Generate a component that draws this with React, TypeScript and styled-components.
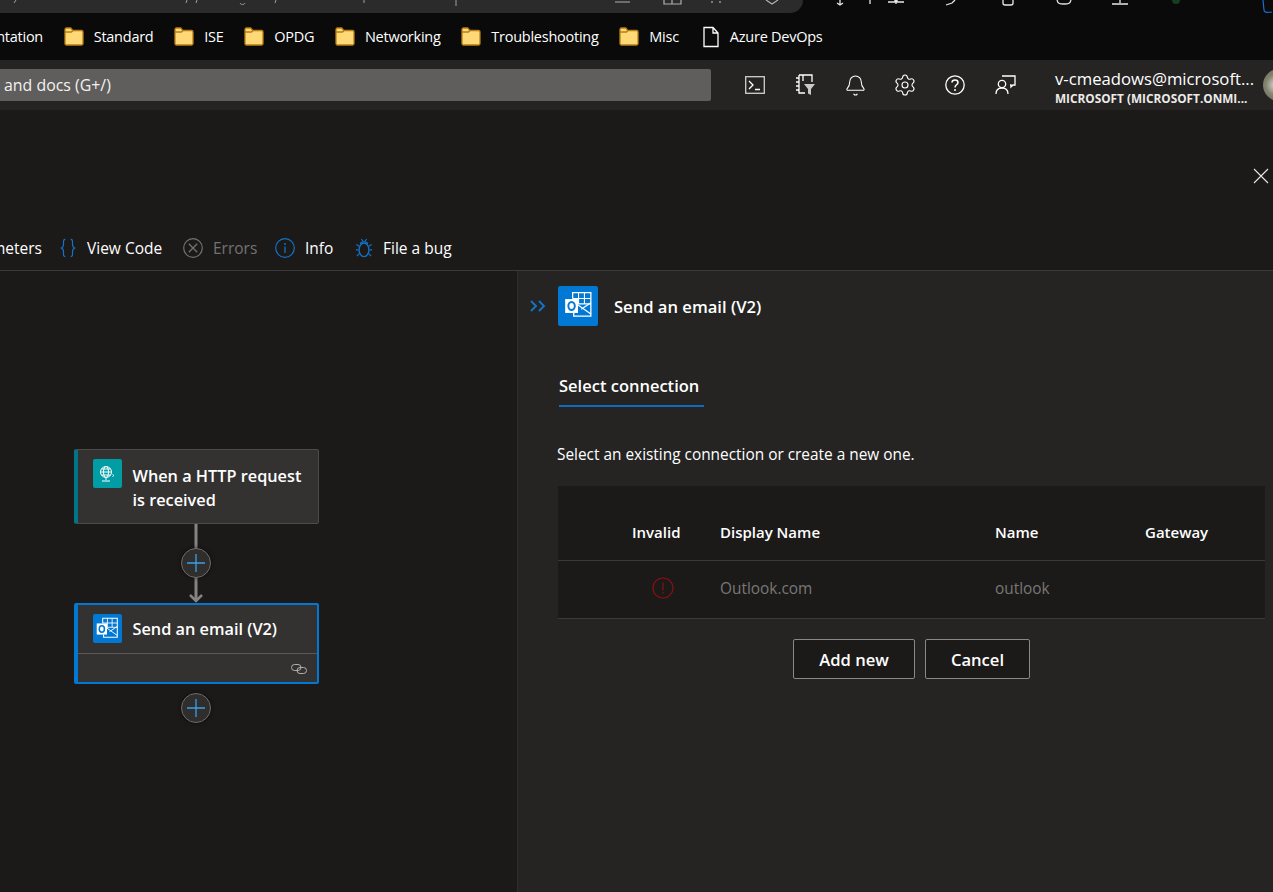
import React from 'react'
import styled, { createGlobalStyle } from 'styled-components'
import { Bell, Settings } from 'lucide-react'

const GlobalStyle = createGlobalStyle`
  html, body {
    margin: 0;
    height: 100%;
    background: #1b1a19;
    overflow: hidden;
  }
  body, button {
    font-family: 'Open Sans', 'Noto Sans', 'Liberation Sans', sans-serif;
  }
  * {
    box-sizing: border-box;
  }
`

const Page = styled.div`
  display: flex;
  flex-direction: column;
  width: 1273px;
  height: 892px;
  overflow: hidden;
  color: #fff;
`

/* browser chrome, cropped at the top of the shot */
const BrowserStrip = styled.div`
  display: flex;
  height: 13px;
  flex: none;
  background: #0a0a0a;
  overflow: hidden;
`

const AddressPill = styled.div`
  display: flex;
  width: 803px;
  height: 13px;
  flex: none;
  background: #2b2b2b;
  border-bottom-right-radius: 13px;
`

const ChromeIcons = styled.div`
  display: flex;
  flex: 1;
  padding-left: 28px;
  gap: 38px;
`

const CropIcon = styled.svg`
  width: 18px;
  height: 5px;
  flex: none;
  overflow: visible;
`

const UrlScraps = styled.svg`
  width: 803px;
  height: 13px;
  flex: none;
`

const BookmarkBar = styled.div`
  display: flex;
  align-items: center;
  height: 47px;
  flex: none;
  background: #0a0a0a;
  font-size: 14.5px;
  letter-spacing: -0.25px;
`

const CutLabel = styled.span<{ $width: number }>`
  display: flex;
  justify-content: flex-end;
  flex: none;
  width: ${({ $width }) => $width}px;
  overflow: hidden;
  white-space: nowrap;
`

const Bookmark = styled.span`
  display: flex;
  align-items: center;
  gap: 10px;
  margin-left: 20.7px;
  white-space: nowrap;
`

const PageBookmark = styled(Bookmark)`
  margin-left: 23px;
`

const FolderIcon = styled.svg`
  width: 20px;
  height: 19px;
  flex: none;
`

const PageIcon = styled.svg`
  width: 18px;
  height: 22px;
  flex: none;
`

const Topbar = styled.header`
  display: flex;
  align-items: center;
  height: 50px;
  flex: none;
  background: #252423;
`

const SearchBox = styled.div`
  display: flex;
  align-items: center;
  width: 711px;
  height: 32px;
  flex: none;
  padding-left: 4px;
  background: #605e5c;
  border-radius: 0 2px 2px 0;
  color: #f3f2f1;
  font-size: 15.9px;
  white-space: nowrap;
`

const TopIcons = styled.div`
  display: flex;
  margin-left: 19px;
`

const TopButton = styled.span`
  display: flex;
  align-items: center;
  justify-content: center;
  width: 50px;
  height: 50px;
  color: #fff;
`

const Account = styled.div`
  display: flex;
  flex-direction: column;
  width: 208px;
  flex: none;
  margin-left: 25px;
  padding-top: 6px;
  white-space: nowrap;
`

const AccountMail = styled.span`
  font-size: 16.7px;
  line-height: 20px;
`

const AccountTenant = styled.span`
  font-size: 11.8px;
  line-height: 18px;
  font-weight: 700;
  color: #edebe9;
`

const Avatar = styled.span`
  width: 32px;
  height: 32px;
  flex: none;
  border-radius: 50%;
  background: radial-gradient(circle at 40% 50%, #c4c2b8 0 12%, #85846f 40%, #55574a 100%);
`

const Blade = styled.main`
  display: flex;
  flex-direction: column;
  flex: 1;
  min-height: 0;
  background: #1b1a19;
`

const BladeHeader = styled.div`
  display: flex;
  justify-content: flex-end;
  height: 126px;
  flex: none;
  padding: 58px 4px 0 0;
`

const CloseIcon = styled.svg`
  width: 16px;
  height: 16px;
  flex: none;
`

const CommandBar = styled.div`
  display: flex;
  align-items: center;
  height: 35px;
  flex: none;
  padding-bottom: 10px;
  border-bottom: 1px solid #3b3a39;
  font-size: 15.5px;
`

const Command = styled.span<{ $disabled?: boolean; $width: number }>`
  display: flex;
  align-items: center;
  gap: 10px;
  flex: none;
  width: ${({ $width }) => $width}px;
  white-space: nowrap;
  color: ${({ $disabled }) => ($disabled ? '#737271' : '#fff')};
`

const CommandLead = styled.span`
  width: 17px;
  flex: none;
`

const CommandIcon = styled.svg<{ $color: string; $width?: number }>`
  width: ${({ $width }) => $width ?? 20}px;
  height: 22px;
  flex: none;
  color: ${({ $color }) => $color};
`

const Workspace = styled.div`
  display: flex;
  flex: 1;
  min-height: 0;
`

const Canvas = styled.section`
  display: flex;
  flex-direction: column;
  align-items: center;
  width: 518px;
  flex: none;
  padding: 178px 199px 0 74px;
  border-right: 1px solid #2f2e2d;
`

const Card = styled.article<{ $accent: string; $selected?: boolean }>`
  width: 245px;
  flex: none;
  background: #333231;
  border: ${({ $selected, $accent }) => ($selected ? `2px solid ${$accent}` : '1px solid #4c4b4a')};
  border-left: 4px solid ${({ $accent }) => $accent};
  border-radius: 2px;
`

const CardHead = styled.div<{ $tall?: boolean }>`
  display: flex;
  align-items: ${({ $tall }) => ($tall ? 'flex-start' : 'center')};
  gap: 11px;
  padding: 9px 10px ${({ $tall }) => ($tall ? 9 : 10)}px 15px;
`

const CardBadge = styled.span<{ $color: string; $size: number }>`
  display: flex;
  align-items: center;
  justify-content: center;
  width: ${({ $size }) => $size}px;
  height: ${({ $size }) => $size}px;
  flex: none;
  background: ${({ $color }) => $color};
  border-radius: 2px;
`

const CardTitle = styled.h3`
  margin: 0;
  padding-top: 1px;
  font-size: 16.3px;
  line-height: 24px;
  font-weight: 600;
  white-space: nowrap;
  color: #fff;
`

const TallTitle = styled(CardTitle)`
  padding: 5px 0 2px;
  white-space: normal;
`

const CardFooter = styled.div`
  display: flex;
  align-items: flex-end;
  justify-content: flex-end;
  height: 29px;
  padding: 0 10px 8px 0;
  border-top: 1px solid #5a5958;
`

const Connector = styled.div`
  position: relative;
  display: flex;
  justify-content: center;
  width: 30px;
  height: 79px;
  flex: none;
`

const AddStep = styled.span`
  display: flex;
  align-items: center;
  justify-content: center;
  width: 30px;
  height: 30px;
  flex: none;
  border-radius: 50%;
  background: #2f2e2d;
  border: 1px solid #6e6d6c;
  box-shadow: 0 0 4px rgba(0, 0, 0, 0.6);
`

const ConnectorAdd = styled(AddStep)`
  position: absolute;
  top: 24px;
  left: 0;
`

const TailAdd = styled(AddStep)`
  margin-top: 9px;
`

const Panel = styled.section`
  flex: 1;
  min-width: 0;
  background: #252423;
  padding: 15px 8px 0 12px;
`

const PanelHead = styled.div`
  display: flex;
  align-items: center;
  height: 40px;
`

const Chevrons = styled.svg`
  width: 16px;
  height: 14px;
  flex: none;
  margin-right: 12px;
`

const PanelTitle = styled.h2`
  margin: 0 0 0 16px;
  font-size: 16.6px;
  font-weight: 600;
`

const Tabs = styled.div`
  display: flex;
  margin: 48px 0 0 29px;
`

const Tab = styled.span`
  padding-bottom: 7px;
  width: 145px;
  border-bottom: 2px solid #0f6cbd;
  font-size: 16.5px;
  line-height: 24px;
  font-weight: 600;
  white-space: nowrap;
`

const Hint = styled.p`
  margin: 36px 0 0 27px;
  font-size: 15.4px;
  line-height: 24px;
`

const ConnectionTable = styled.table`
  display: block;
  width: 707px;
  margin: 19px 0 0 28px;
  background: #1b1a19;
  border-collapse: collapse;
  font-size: 15.4px;
`

const HeadCell = styled.th<{ $width: number; $pad?: number }>`
  width: ${({ $width }) => $width}px;
  height: 74px;
  padding: 19px 0 0 ${({ $pad }) => $pad ?? 0}px;
  border-bottom: 1px solid #3b3a39;
  font-size: 15px;
  font-weight: 600;
  text-align: left;
`

const BodyCell = styled.td<{ $pad?: number }>`
  height: 58px;
  padding: 0 0 2px ${({ $pad }) => $pad ?? 0}px;
  border-bottom: 1px solid #3b3a39;
  color: #797775;
`

const InvalidIcon = styled.svg`
  display: block;
  width: 22px;
  height: 22px;
`

const Actions = styled.div`
  display: flex;
  justify-content: center;
  gap: 10px;
  width: 707px;
  margin: 20px 0 0 28px;
`

const ActionButton = styled.button<{ $width: number }>`
  width: ${({ $width }) => $width}px;
  height: 40px;
  padding: 2px 0 0;
  background: #1b1a19;
  border: 1px solid #8a8886;
  border-radius: 2px;
  color: #fff;
  font-size: 16.6px;
  font-weight: 600;
`

const Folder = () => (
  <FolderIcon viewBox="0 0 20 19">
    <path d="M1 2.500C1 1.700 1.700 1 2.500 1h4.200l2 2.500h8.800c.8 0 1.500.7 1.500 1.500v11.500c0 .8-.7 1.500-1.500 1.500h-15C1.700 18 1 17.300 1 16.500z" fill="#ffd877" stroke="#b77f14" strokeWidth="1.300" />
    <path d="M1 5h6.500l1.500-1.500" fill="none" stroke="#b77f14" strokeWidth="1.300" />
  </FolderIcon>
)

const Stroke = ({ d, width = 1.3 }: { d: string; width?: number }) => (
  <path d={d} fill="none" stroke="currentColor" strokeWidth={width} />
)

const OutlookMark = ({ size }: { size: number }) => (
  <svg width={size} height={size} viewBox="0 0 28 28" fill="none" stroke="#fff">
    <path d="M9 7V1.500h17v22H10v-3" strokeWidth="1.200" />
    <path d="M14.500 1.500V12M20 1.500V12M9 7h17M14 12h12" strokeWidth="1" />
    <path d="M14 13l12 8.500M26 11l-9 6" strokeWidth="1.100" />
    <rect x="2" y="7.500" width="12" height="13" fill="#fff" stroke="none" />
    <ellipse cx="8" cy="14" rx="3" ry="3.700" stroke="#0078d4" strokeWidth="1.800" />
  </svg>
)

const GlobeMark = () => (
  <svg width="18" height="18" viewBox="0 0 18 18" fill="none" stroke="#fff" strokeWidth="1">
    <circle cx="8" cy="7" r="5.500" />
    <ellipse cx="8" cy="7" rx="2.500" ry="5.500" />
    <path d="M2.500 7h11M3.500 4h9M3.500 10h9M8 12.500v2.500M4 16h8" />
    <path d="M14.500 9.500l1.500 1-1.500 1" strokeWidth="0.900" />
  </svg>
)

const PlusMark = () => (
  <svg width="18" height="18" viewBox="0 0 18 18">
    <path d="M9 0v18M0 9h18" stroke="#3aa0e8" strokeWidth="1.300" />
  </svg>
)

export default function App() {
  return (
    <Page>
      <GlobalStyle />
      <BrowserStrip>
        <AddressPill>
          <UrlScraps viewBox="0 0 803 13">
            <path d="M14 3l2-3M186 3l1-3M196 3l1-3M240 3c1 2 4 2 5 0M275 3l1-3M364 3V0M456 6V0" stroke="#a0a0a0" strokeWidth="1" fill="none" />
            <path d="M615 2h15M664 0v4h17V0M672 0v4M712 1v2M720 1v2M766 0l6 4 6-4" stroke="#b0b0b0" strokeWidth="1.200" fill="none" />
          </UrlScraps>
        </AddressPill>
        <ChromeIcons>
          {[
            'M6 3l3 2 3-2M9 0v5M39 0v4',
            'M1 2h7v-2M10 0v2h7M9 0v4',
            'M3 5l6-2 3-3',
            'M4 0v3c0 1 1 2 2 2h6c1 0 2-1 2-2V0',
            'M2 0c1 4 3 4 7 4s6 0 7-4',
            'M1 4h16M9 0v3',
          ].map((d) => (
            <CropIcon key={d} viewBox="0 0 18 5">
              <path d={d} stroke="#e8e8e8" strokeWidth="1.300" fill="none" />
            </CropIcon>
          ))}
          <CropIcon viewBox="0 0 18 5">
            <circle cx="9" cy="0" r="4" fill="#143f1e" />
            <path d="M96 0l1 10c0 2 2 3 8 2" stroke="#1a6fd0" strokeWidth="1.200" fill="none" />
          </CropIcon>
        </ChromeIcons>
      </BrowserStrip>

      <BookmarkBar>
        <CutLabel $width={43}>Documentation</CutLabel>
        {['Standard', 'ISE', 'OPDG', 'Networking', 'Troubleshooting', 'Misc'].map((name) => (
          <Bookmark key={name}>
            <Folder />
            {name}
          </Bookmark>
        ))}
        <PageBookmark>
          <PageIcon viewBox="0 0 18 22">
            <path d="M2 1.500h9l5 5.500v13.500H2zM11 1.500V7h5" fill="none" stroke="#fff" strokeWidth="1.300" />
          </PageIcon>
          Azure DevOps
        </PageBookmark>
      </BookmarkBar>

      <Topbar>
        <SearchBox>and docs (G+/)</SearchBox>
        <TopIcons>
          <TopButton>
            <svg width="20" height="18" viewBox="0 0 20 18" fill="none" stroke="currentColor" strokeWidth="1.300">
              <rect x="0.700" y="0.700" width="18.600" height="16.600" stroke="#d0d0d0" />
              <path d="M4 5l4 4-4 4M10 13.500h5" />
            </svg>
          </TopButton>
          <TopButton>
            <svg width="21" height="22" viewBox="0 0 21 22" fill="none">
              <Stroke d="M4 1h13v7M4 1v18h6M1 4h3M1 8h3M1 12h3M1 16h3M8 1v6" />
              <path d="M9 10h11l-4 5v6l-3-1.500V15z" fill="#c8c8c8" />
            </svg>
          </TopButton>
          <TopButton>
            <Bell size={23} strokeWidth={1.1} />
          </TopButton>
          <TopButton>
            <Settings size={24} strokeWidth={1.1} />
          </TopButton>
          <TopButton>
            <svg width="20" height="20" viewBox="0 0 20 20" fill="none">
              <circle cx="10" cy="10" r="9.200" stroke="currentColor" strokeWidth="1.300" />
              <Stroke d="M7 7.500C7 5.800 8.300 5 10 5s3 1 3 2.500c0 2.300-3 2.300-3 5" width={1.500} />
              <circle cx="10" cy="15" r="1" fill="currentColor" />
            </svg>
          </TopButton>
          <TopButton>
            <svg width="21" height="20" viewBox="0 0 21 20" fill="none">
              <Stroke d="M7 1h13v9h-2l-2 2v-2h-1" />
              <circle cx="7" cy="9" r="3.700" stroke="currentColor" strokeWidth="1.300" />
              <Stroke d="M1 19c0-4 2.500-6 6-6s6 2 6 6" />
            </svg>
          </TopButton>
        </TopIcons>
        <Account>
          <AccountMail>v-cmeadows@microsoft...</AccountMail>
          <AccountTenant>MICROSOFT (MICROSOFT.ONMI...</AccountTenant>
        </Account>
        <Avatar />
      </Topbar>

      <Blade>
        <BladeHeader>
          <CloseIcon viewBox="0 0 16 16">
            <path d="M1 1l14 14M15 1L1 15" stroke="#e8e8e8" strokeWidth="1.100" />
          </CloseIcon>
        </BladeHeader>

        <CommandBar>
          <CutLabel $width={42}>Parameters</CutLabel>
          <CommandLead />
          <Command $width={124}>
            <CommandIcon viewBox="0 0 20 22" $color="#1373c9" $width={18}>
              <Stroke d="M7 1.500C4.500 1.500 5 4 5 7c0 2.500-.5 3.500-3 4 2.500.5 3 1.500 3 4 0 3-.5 5.500 2 5.500M13 1.500c2.500 0 2 2.500 2 5.500 0 2.500.5 3.500 3 4-2.500.5-3 1.500-3 4 0 3 .5 5.500-2 5.500" />
            </CommandIcon>
            View Code
          </Command>
          <Command $disabled $width={92}>
            <CommandIcon viewBox="0 0 20 22" $color="#737271">
              <circle cx="10" cy="11" r="9.300" fill="none" stroke="currentColor" strokeWidth="1.200" />
              <Stroke d="M5.800 6.800l8.400 8.400M14.200 6.800l-8.400 8.400" />
            </CommandIcon>
            Errors
          </Command>
          <Command $width={80}>
            <CommandIcon viewBox="0 0 20 22" $color="#1373c9">
              <circle cx="10" cy="11" r="9.300" fill="none" stroke="currentColor" strokeWidth="1.200" />
              <Stroke d="M10 9.500V16" />
              <circle cx="10" cy="7" r="0.900" fill="currentColor" />
            </CommandIcon>
            Info
          </Command>
          <Command $width={100}>
            <CommandIcon viewBox="0 0 20 22" $color="#1373c9" $width={18}>
              <ellipse cx="10" cy="13" rx="5.500" ry="7.500" fill="none" stroke="currentColor" strokeWidth="1.500" />
              <Stroke d="M6 6.500c0-3 8-3 8 0M7 1l2 2.500M13 1l-2 2.500M4.500 9L1.500 7M15.500 9l3-2M4 13H1M16 13h3M5 17l-3 3M15 17l3 3" />
            </CommandIcon>
            File a bug
          </Command>
        </CommandBar>

        <Workspace>
          <Canvas>
            <Card $accent="#00758a">
              <CardHead $tall>
                <CardBadge $color="#009da5" $size={29}>
                  <GlobeMark />
                </CardBadge>
                <TallTitle>When a HTTP request is received</TallTitle>
              </CardHead>
            </Card>
            <Connector>
              <svg width="30" height="79" viewBox="0 0 30 79" fill="none" stroke="#858483">
                <path d="M15 0v77" strokeWidth="3" />
                <path d="M9 71l6 6 6-6" strokeWidth="2.500" />
              </svg>
              <ConnectorAdd>
                <PlusMark />
              </ConnectorAdd>
            </Connector>
            <Card $accent="#0078d4" $selected>
              <CardHead>
                <CardBadge $color="#0078d4" $size={29}>
                  <OutlookMark size={24} />
                </CardBadge>
                <CardTitle>Send an email (V2)</CardTitle>
              </CardHead>
              <CardFooter>
                <svg width="16" height="10" viewBox="0 0 16 10" fill="none" stroke="#b0afae" strokeWidth="1">
                  <rect x="0.500" y="0.500" width="9.500" height="6" rx="3" />
                  <rect x="6" y="3.500" width="9.500" height="6" rx="3" />
                </svg>
              </CardFooter>
            </Card>
            <TailAdd>
              <PlusMark />
            </TailAdd>
          </Canvas>

          <Panel>
            <PanelHead>
              <Chevrons viewBox="0 0 16 14">
                <path d="M1 2l5 5-5 5M9 2l5 5-5 5" fill="none" stroke="#1373c9" strokeWidth="1.900" />
              </Chevrons>
              <CardBadge $color="#0078d4" $size={40}>
                <OutlookMark size={30} />
              </CardBadge>
              <PanelTitle>Send an email (V2)</PanelTitle>
            </PanelHead>

            <Tabs>
              <Tab>Select connection</Tab>
            </Tabs>

            <Hint>Select an existing connection or create a new one.</Hint>

            <ConnectionTable>
              <thead>
                <tr>
                  <HeadCell $width={162} $pad={74}>Invalid</HeadCell>
                  <HeadCell $width={275}>Display Name</HeadCell>
                  <HeadCell $width={150}>Name</HeadCell>
                  <HeadCell $width={120}>Gateway</HeadCell>
                </tr>
              </thead>
              <tbody>
                <tr>
                  <BodyCell $pad={94}>
                    <InvalidIcon viewBox="0 0 22 22" fill="none" stroke="#8c1010" strokeWidth="1.200">
                      <circle cx="11" cy="11" r="10" />
                      <path d="M11 5.500v8M11 15v1.500" />
                    </InvalidIcon>
                  </BodyCell>
                  <BodyCell>Outlook.com</BodyCell>
                  <BodyCell>outlook</BodyCell>
                  <BodyCell />
                </tr>
              </tbody>
            </ConnectionTable>

            <Actions>
              <ActionButton $width={122}>Add new</ActionButton>
              <ActionButton $width={105}>Cancel</ActionButton>
            </Actions>
          </Panel>
        </Workspace>
      </Blade>
    </Page>
  )
}
